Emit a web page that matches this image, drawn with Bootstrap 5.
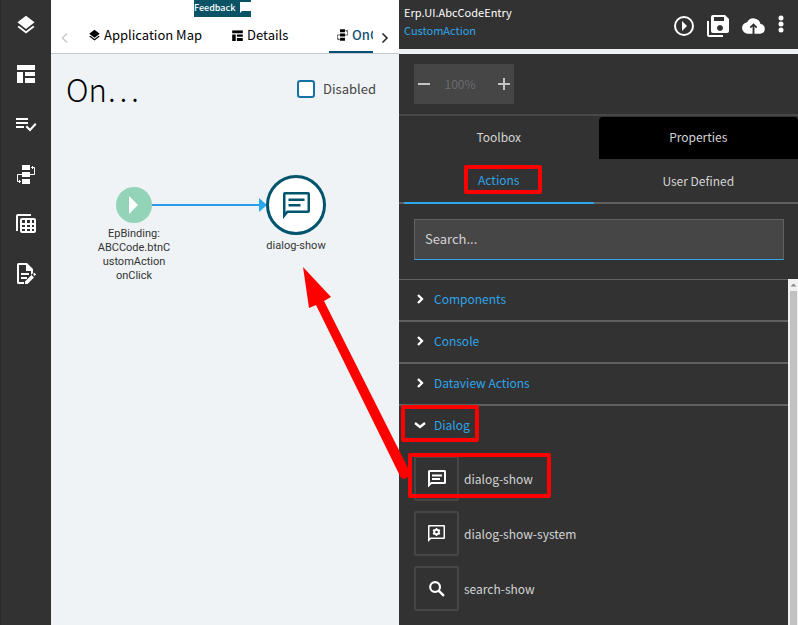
<!DOCTYPE html>
<html lang="en">
<head>
<meta charset="utf-8">
<meta name="viewport" content="width=device-width, initial-scale=1">
<title>Erp.UI.AbcCodeEntry</title>
<link href="https://cdn.jsdelivr.net/npm/bootstrap@5.3.0/dist/css/bootstrap.min.css" rel="stylesheet">
<style>
  :root { --dark: #323232; --line: #606060; --blue: #30a4ea; --teal: #00546b; --red: #f00; }
  body { font-family: "Noto Sans CJK SC", "Noto Sans CJK JP", sans-serif; font-size: 13px; line-height: 20px; color: #000; background: #eff3f6; }
  svg { display: block; fill: currentColor; flex-shrink: 0; }
  .plain { border: 0; padding: 0; background: none; color: inherit; }
  .shell { display: grid; grid-template-columns: 51px minmax(0, 1fr) 50%; height: 100vh; overflow: hidden; }
  .rail { background: var(--dark); border-left: 1px solid #262c2c; color: #fff; }
  .rail button { width: 50px; height: 50px; display: grid; place-items: center; padding-bottom: 2px; }
  .topbar { height: 54px; background: #fff; border-bottom: 1px solid #c4c8cf; }
  .feedback { position: absolute; left: 143px; top: 0; width: 57px; height: 17px; background: #0a5265; color: #fff; font-size: 9px; line-height: 15px; font-weight: 500; }
  .feedback svg { margin-top: 2px; }
  .tabs { height: 53px; padding: 0 2px 0 2px; }
  .tabs a { color: #000; height: 53px; padding-top: 25px; white-space: nowrap; }
  .tabs button { padding: 22px 8px 0; }
  .tabs .map-tab { margin-left: 12px; }
  .tabs .details-tab { margin-left: 30px; }
  .tabs .current { color: #155276; font-weight: 500; border-bottom: 2px solid #0a5075; width: 44px; overflow: hidden; }
  .head { padding: 16px 23px 0 15px; }
  .head h1 { font-size: 31px; line-height: 38px; font-weight: 300; }
  .head input { width: 18px; height: 18px; margin: 0; border: 2px solid #1672a4; border-radius: 2px; background: #fff; }
  .head label { color: #454545; }
  .node { position: absolute; font: 11px/14px Roboto, sans-serif; color: #333; text-align: center; }
  .node-start { left: 46px; top: 133px; width: 74px; }
  .node-dialog { left: 205px; top: 121px; width: 80px; }
  .wire { position: absolute; left: 100px; top: 143px; }
  .start-dot { width: 36px; height: 36px; border-radius: 50%; background: #93d3b7; color: #fff; margin-bottom: 4px; }
  .dialog-dot { width: 60px; height: 60px; border-radius: 50%; background: #fff; border: 3px solid var(--teal); color: var(--teal); margin-bottom: 4px; }
  .panel { background: var(--dark); color: #d4d4d4; position: relative; z-index: 2; }
  .title { height: 54px; border-bottom: 5px solid #edf1f6; padding: 2px 14px 0 5px; color: #fff; }
  .title .names { font-size: 11px; line-height: 18px; padding-top: 1px; }
  .title .tools { gap: 13px; }
  .blue { color: var(--blue); }
  .zoombar { height: 62px; padding: 10px 15px; border-bottom: 2px solid #484848; }
  .zoomer { width: 100px; height: 40px; background: #464646; color: #6b6b6b; padding: 0 4px; font-size: 12px; }
  .zoomer button { color: #c4c4c4; }
  .maintabs { padding-top: 1px; }
  .maintabs button { height: 42px; font-size: 12px; padding: 0 0 2px; border: 0; color: #d4d4d4; border-radius: 4px 4px 0 0; }
  .maintabs .other { background: #000; color: #d4d4d4; }
  .subtabs { border-bottom: 2px solid var(--line); height: 45px; }
  .subtabs button { height: 45px; font-size: 12px; padding-bottom: 1px; }
  .subtabs .active-tab { margin: 0 5px; color: var(--blue); border-bottom: 2px solid #2ca7ea; position: relative; }
  .searchwrap { padding: 15px 14px 19px 15px; border-bottom: 1px solid var(--line); }
  .searchwrap input { height: 41px; border: 1px solid #626262; border-bottom-color: #2ca7ea; border-radius: 0; background: #464646; color: #d4d4d4; font-size: 13px; padding: 0 10px 2px; }
  .searchwrap input::placeholder { color: #d4d4d4; opacity: 1; }
  .tree { min-height: 0; }
  .group { height: 42px; border-bottom: 2px solid var(--line); padding: 0 0 2px 14px; gap: 7px; font-size: 12px; color: var(--blue); }
  .group svg { color: #fff; }
  .group.open { border-color: transparent; position: relative; }
  .acts { padding: 8px 15px; gap: 10px; }
  .acts button { height: 45px; gap: 5px; color: #d4d4d4; font-size: 12px; position: relative; text-align: left; }
  .tile { width: 45px; height: 45px; border: 2px solid #464646; border-radius: 2px; color: #fff; }
  .scroller { width: 10px; background: #f1f1f1; margin-top: -1px; }
  .scroller i { margin: 2px 1px 0 2px; background: #c1c1c1; }
  .callout { position: absolute; border: 4px solid var(--red); border-radius: 2px; pointer-events: none; }
  .on-actions { left: calc(50% - 35px); top: 6px; width: 78px; height: 29px; }
  .on-dialog { left: 2px; top: -1px; width: 78px; height: 37px; }
  .on-show { left: -6px; top: -3px; width: 143px; height: 45px; }
  .pointer { position: absolute; left: -98px; top: 264px; color: var(--red); pointer-events: none; }
</style>
<script src="https://cdn.jsdelivr.net/npm/bootstrap@5.3.0/dist/js/bootstrap.bundle.min.js"></script>
</head>
<body>
<svg class="d-none">
  <symbol id="layers" viewBox="2.500 2 19 19.500"><path d="M12 16.500 4.600 10.800 3 9.500 12 2.500l9 7-1.600 1.300zM12 18.800l7.400-5.800 1.600 1.300-9 7-9-7 1.600-1.300z"/></symbol>
  <symbol id="layout" viewBox="0 0 18 18"><path d="M0 0h18v5H0zM0 7h6v11H0zM8 7h10v4H8zM8 13h10v5H8z"/></symbol>
  <symbol id="flow" viewBox="0 0 18 19"><path d="M5 0h8v5H5zM5 7h8v5H5zM5 14h8v5H5z"/><path d="M14.500 2.500h3v7H13M5 9.500H.5v7H4M16 1l-1.500 1.500L16 4M2 15l1.500 1.500L2 18" fill="none" stroke="currentColor"/></symbol>
  <symbol id="message" viewBox="0 0 27 27"><path d="M0 2Q0 0 2 0h23q2 0 2 2v17q0 2-2 2H5l-5 6zm2.500.5V20L4 18.500h20.500v-16zM5.500 6.500h16V9h-16zM5.500 12h12v2.500h-12z" fill-rule="evenodd"/></symbol>
  <symbol id="message-small" viewBox="0 0 18 18"><path d="M0 1.500Q0 0 1.500 0h15Q18 0 18 1.500v11q0 1.500-1.500 1.500H3.500L0 17.500zM2 2v11l1-1h13V2zM4 4.500h10v2H4zM4 8h8v2H4z" fill-rule="evenodd"/></symbol>
</svg>
<div class="shell">
  <nav class="rail d-flex flex-column" aria-label="Main">
    <button class="plain" aria-label="Layers"><svg width="18" height="19"><use href="#layers"/></svg></button>
    <button class="plain" aria-label="Layout"><svg width="18" height="18"><use href="#layout"/></svg></button>
    <button class="plain" aria-label="Rules"><svg width="22" height="18" viewBox="0 0 22 18"><path d="M1 3h12v2H1zM1 7h12v2H1zM1 11h8v2H1zM21.500 9.500l-6.500 7-4.500-4.500 1.500-1.500 3 3 5-5.500z"/></svg></button>
    <button class="plain" aria-label="Events"><svg width="18" height="19"><use href="#flow"/></svg></button>
    <button class="plain" aria-label="Data"><svg width="20" height="20" viewBox="0 0 20 20"><path d="M0 17V2Q0 0 2 0h13v2H2v15z"/><path fill-rule="evenodd" d="M4 6q0-2 2-2h12q2 0 2 2v11q0 2-2 2H6q-2 0-2-2zm2 0v3h3V6zm5 0v3h3V6zm5 0v3h2V6zM6 11v2h3v-2zm5 0v2h3v-2zm5 0v2h2v-2zM6 15v2h3v-2zm5 0v2h3v-2zm5 0v2h2v-2z"/></svg></button>
    <button class="plain" aria-label="Scripts"><svg width="20" height="22" viewBox="0 0 20 22"><path fill-rule="evenodd" d="M2.500 0H11l6 6v4l-2 2V8h-5V2H3v17h5v2H2.500Q1 21 1 19.500v-18Q1 0 2.500 0zM5 10h8v2H5zM5 14h6v2H5zM9 18.500l6.500-6.500 2.500 2.500-6.500 6.500H9zM17 11l1.500-1.300L20 11.500 18.700 13z"/></svg></button>
  </nav>

  <main class="position-relative">
    <header class="topbar position-relative">
      <button class="feedback plain d-flex justify-content-between align-items-start">Feedback<svg width="11" height="11" viewBox="0 0 11 11"><path d="M0 0h11v9H2L0 11z"/></svg></button>
      <nav class="tabs d-flex" aria-label="Views">
        <button class="plain" aria-label="Previous"><svg width="8" height="12" viewBox="0 0 8 12"><path d="M6 1.500 1.500 6 6 10.500" fill="none" stroke="#c8c8c8" stroke-width="1.500"/></svg></button>
        <a href="#" class="map-tab d-flex text-decoration-none"><svg class="mt-1 me-1" width="11" height="12"><use href="#layers"/></svg>Application Map</a>
        <a href="#" class="details-tab d-flex text-decoration-none"><svg class="mt-1 me-1" width="11" height="12" viewBox="0 -2 18 20"><use href="#layout" width="18" height="18"/></svg>Details</a>
        <a href="#" class="current d-flex ps-2 ms-auto text-decoration-none"><svg class="mt-1 me-1 text-black" width="11" height="12"><use href="#flow"/></svg>OnClick</a>
        <button class="plain" aria-label="Next"><svg width="8" height="12" viewBox="0 0 8 12"><path d="M1.500 1.500 6 6 1.500 10.500" fill="none" stroke="#222" stroke-width="1.500"/></svg></button>
      </nav>
    </header>
    <section class="position-relative">
      <div class="head d-flex justify-content-between">
        <h1 class="m-0">On…</h1>
        <div class="d-flex align-items-center gap-2"><input class="form-check-input" type="checkbox" id="disabled"><label for="disabled">Disabled</label></div>
      </div>
      <svg class="wire" width="116" height="16" viewBox="0 0 116 16"><path d="M0 8h110" stroke="#2b9cec" stroke-width="2"/><path d="M108 1v14l8-7z" fill="#2ba8ee"/></svg>
      <div class="node node-start"><div class="start-dot d-flex align-items-center justify-content-center mx-auto"><svg width="10" height="18" viewBox="0 0 10 18"><path d="M0 0v18l9-9z"/></svg></div>EpBinding:<br>ABCCode.btnC<br>ustomAction<br>onClick</div>
      <div class="node node-dialog"><div class="dialog-dot d-flex align-items-center justify-content-center mx-auto"><svg width="27" height="27"><use href="#message"/></svg></div>dialog-show</div>
    </section>
  </main>

  <aside class="panel d-flex flex-column">
    <header class="title d-flex justify-content-between">
      <div class="names"><div>Erp.UI.AbcCodeEntry</div><a href="#" class="blue text-decoration-none">CustomAction</a></div>
      <div class="tools d-flex align-items-center">
        <button class="plain" aria-label="Run"><svg width="20" height="20" viewBox="0 0 20 20"><circle cx="10" cy="10" r="9" fill="none" stroke="currentColor" stroke-width="2"/><path d="M8 5v10l5-5z"/></svg></button>
        <button class="plain" aria-label="Save all"><svg width="22" height="22" viewBox="0 0 22 22"><path fill-rule="evenodd" d="M6 0h12l4 4v12q0 2-2 2H6q-2 0-2-2V2q0-2 2-2zm1 2v4h10V2zm6 8a3 3 0 1 0 .01 0zM0 6h2v14h14v2H2q-2 0-2-2z"/></svg></button>
        <button class="plain" aria-label="Publish"><svg width="23" height="16" viewBox="0 0 24 16"><path fill-rule="evenodd" d="M19.350 6.040A7.500 7.500 0 0 0 5.350 4.040 6 6 0 0 0 6 16h13a5 5 0 0 0 .35-9.960zM12 5l4 4-1.300 1.300L13 8.600V16h-2V8.600l-1.700 1.700L8 9z"/></svg></button>
        <button class="plain" aria-label="More"><svg width="6" height="22" viewBox="0 0 6 22"><circle cx="3" cy="3" r="2.500"/><circle cx="3" cy="9" r="2.500"/><circle cx="3" cy="15" r="2.500"/></svg></button>
      </div>
    </header>
    <div class="zoombar"><div class="zoomer d-flex align-items-center justify-content-between">
      <button class="plain" aria-label="Zoom out"><svg width="12" height="12"><path d="M0 5h12v2H0z"/></svg></button><span class="pe-2">100%</span><button class="plain" aria-label="Zoom in"><svg width="12" height="12"><path d="M0 5h5V0h2v5h5v2H7v5H5V7H0z"/></svg></button>
    </div></div>
    <div class="maintabs row g-0"><div class="col-6"><button class="btn w-100">Toolbox</button></div><div class="col-6"><button class="btn other w-100">Properties</button></div></div>
    <div class="subtabs row g-0"><div class="col-6 d-flex"><button class="plain active-tab flex-fill">Actions<span class="callout on-actions"></span></button></div><div class="col-6 d-flex"><button class="plain flex-fill">User Defined</button></div></div>
    <div class="searchwrap"><input class="form-control shadow-none" type="text" placeholder="Search..." aria-label="Search"></div>
    <div class="tree d-flex flex-fill">
      <div class="flex-fill d-flex flex-column">
        <button class="group plain d-flex align-items-center"><svg width="14" height="14"><path d="M5 3l4 4-4 4" fill="none" stroke="currentColor" stroke-width="2.300"/></svg>Components</button>
        <button class="group plain d-flex align-items-center"><svg width="14" height="14"><path d="M5 3l4 4-4 4" fill="none" stroke="currentColor" stroke-width="2.300"/></svg>Console</button>
        <button class="group plain d-flex align-items-center"><svg width="14" height="14"><path d="M5 3l4 4-4 4" fill="none" stroke="currentColor" stroke-width="2.300"/></svg>Dataview Actions</button>
        <button class="group open plain d-flex align-items-center"><svg width="14" height="14"><path d="M2 5l5 4 5-4" fill="none" stroke="currentColor" stroke-width="2.300"/></svg>Dialog<span class="callout on-dialog"></span></button>
        <div class="acts d-flex flex-column">
          <button class="plain d-flex align-items-center"><span class="tile d-flex align-items-center justify-content-center"><svg width="18" height="18"><use href="#message-small"/></svg></span>dialog-show<span class="callout on-show"></span></button>
          <button class="plain d-flex align-items-center"><span class="tile d-flex align-items-center justify-content-center"><svg width="18" height="18" viewBox="0 0 18 18"><path fill-rule="evenodd" d="M0 1q0-1 1-1h15q1 0 1 1v12q0 1-1 1H3l-3 3zm1.500.5V13l1-.5h13v-11z"/><circle cx="8.500" cy="7" r="2.300" fill="none" stroke="currentColor" stroke-width="2"/><path d="M8.500 3v8M5 5l7 4M5 9l7-4" stroke="currentColor" stroke-width="1.500"/><circle cx="8.500" cy="7" r="1.300" fill="#323232"/></svg></span>dialog-show-system</button>
          <button class="plain d-flex align-items-center"><span class="tile d-flex align-items-center justify-content-center"><svg width="16" height="16" viewBox="0 0 15 15"><path d="M9 9 14 14" stroke="currentColor" stroke-width="2.200"/><circle cx="5.700" cy="5.700" r="4.600" fill="none" stroke="currentColor" stroke-width="2"/></svg></span>search-show</button>
        </div>
      </div>
      <div class="scroller d-flex flex-column" aria-hidden="true"><svg width="10" height="10"><path d="M2.500 7.500h6L5.500 4.500z" fill="#8a8a8a"/></svg><i class="d-block flex-fill"></i></div>
    </div>
    <svg class="pointer" width="110" height="216" viewBox="0 0 110 216"><path d="M2 3 30 33 23 37 110 210 104 215 100 214 15 41 8 44z"/></svg>
  </aside>
</div>
</body>
</html>
